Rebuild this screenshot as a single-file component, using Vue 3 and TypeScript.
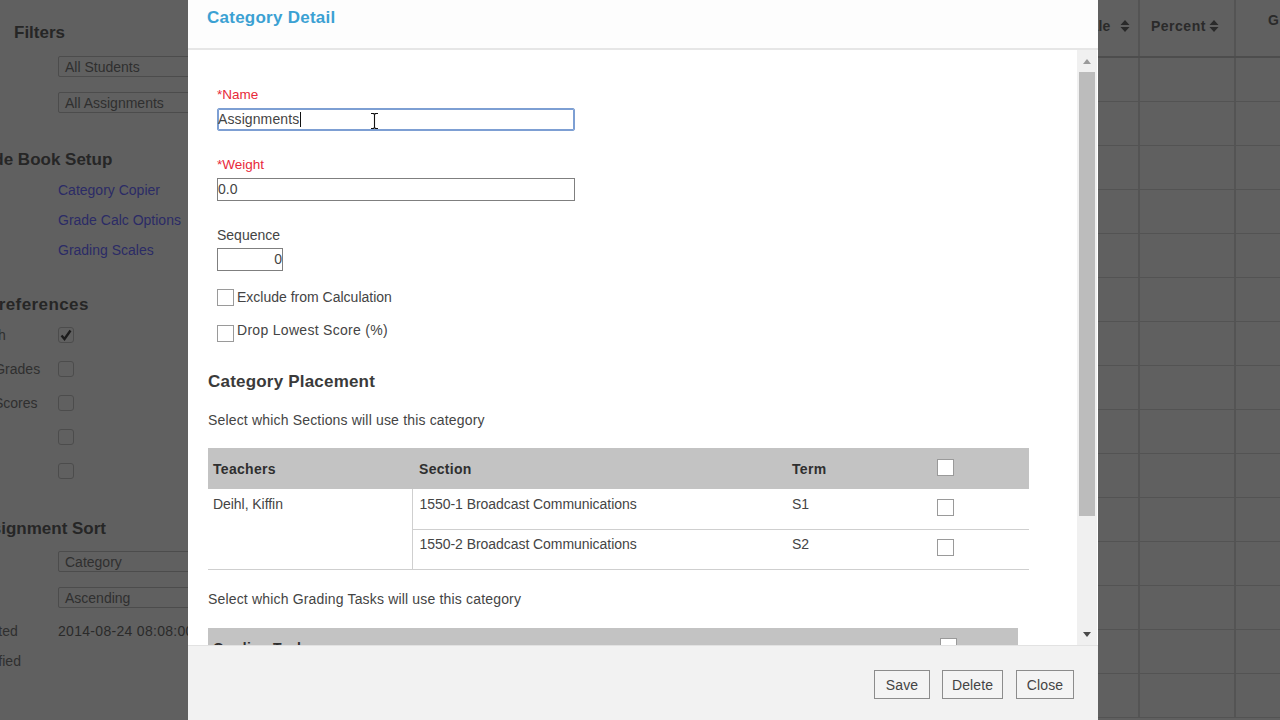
<template>
  <div class="page">
    <!-- dimmed gradebook behind the dialog -->
    <div class="backdrop">
      <aside class="side">
        <h3 class="side-title filters">Filters</h3>
        <div class="side-select first">All Students</div>
        <div class="side-select">All Assignments</div>

        <h3 class="side-title setup">Grade Book Setup</h3>
        <a v-for="link in setupLinks" :key="link" class="side-link">{{ link }}</a>

        <h3 class="side-title prefs">Preferences</h3>
        <div v-for="pref in prefs" :key="pref.label" class="pref-row">
          <span class="pref-label" :style="{ paddingLeft: pref.shift + 'px' }">{{ pref.label }}</span>
          <span class="side-check" :class="{ on: pref.on }">
            <svg v-if="pref.on" viewBox="0 0 12 12" width="12" height="12">
              <path d="M1.5 6.5 L4.5 10 L10.5 1.5" fill="none" stroke="#1c1c1c" stroke-width="2.4" />
            </svg>
          </span>
        </div>

        <h3 class="side-title sort">Assignment Sort</h3>
        <div class="side-select first-sort">Category</div>
        <div class="side-select">Ascending</div>
        <div class="meta-row first-meta">
          <span class="meta-label">Created</span>
          <span class="meta-value">2014-08-24 08:08:00</span>
        </div>
        <div class="meta-row">
          <span class="meta-label">Modified</span>
        </div>
      </aside>

      <section class="book">
        <div class="book-head">
          <div class="book-col c1">
            <span class="head-text clip">Scale</span>
            <svg class="sort-icon" viewBox="0 0 10 14" width="10" height="14">
              <path d="M5 1 L9.5 6 H0.5 Z M5 13 L0.5 8 H9.5 Z" fill="#2a2a2a" />
            </svg>
          </div>
          <div class="book-col c2">
            <span class="head-text">Percent</span>
            <svg class="sort-icon" viewBox="0 0 10 14" width="10" height="14">
              <path d="M5 1 L9.5 6 H0.5 Z M5 13 L0.5 8 H9.5 Z" fill="#2a2a2a" />
            </svg>
          </div>
          <div class="book-col c3"><span class="head-text">G</span></div>
        </div>
        <div v-for="n in 15" :key="n" class="book-row">
          <div class="book-col c1"></div>
          <div class="book-col c2"></div>
          <div class="book-col c3"></div>
        </div>
      </section>
    </div>

    <!-- dialog -->
    <div class="modal">
      <header class="modal-head">
        <h2 class="modal-title">Category Detail</h2>
      </header>

      <div class="modal-body">
        <div class="scroll-content">
          <div class="field-block name-block">
            <label class="req">*Name</label>
            <div class="text-input focused">Assignments<span class="caret"></span></div>
          </div>
          <div class="field-block weight-block">
            <label class="req">*Weight</label>
            <div class="text-input">0.0</div>
          </div>
          <div class="field-block seq-block">
            <label>Sequence</label>
            <div class="text-input seq">0</div>
          </div>

          <div class="check-row exclude">
            <span class="check"></span>
            <span>Exclude from Calculation</span>
          </div>
          <div class="check-row drop">
            <span class="check"></span>
            <span class="drop-text">Drop Lowest Score (%)</span>
          </div>

          <h3 class="placement">Category Placement</h3>
          <p class="hint sections-hint">Select which Sections will use this category</p>

          <table class="place-table">
            <colgroup>
              <col class="w-teacher" />
              <col class="w-section" />
              <col class="w-term" />
              <col />
            </colgroup>
            <thead>
              <tr>
                <th>Teachers</th>
                <th>Section</th>
                <th>Term</th>
                <th><span class="check white"></span></th>
              </tr>
            </thead>
            <tbody>
              <tr v-for="(row, i) in sections" :key="row.section">
                <td v-if="i === 0" rowspan="2" class="teacher">Deihl, Kiffin</td>
                <td>{{ row.section }}</td>
                <td>{{ row.term }}</td>
                <td><span class="check low"></span></td>
              </tr>
            </tbody>
          </table>

          <p class="hint tasks-hint">Select which Grading Tasks will use this category</p>

          <div class="tasks-head">
            <span>Grading Tasks</span>
            <span class="check white"></span>
          </div>
        </div>

        <div class="scrollbar">
          <span class="arrow up"></span>
          <span class="thumb"></span>
          <span class="arrow down"></span>
        </div>

        <!-- mouse pointer over the name field -->
        <svg class="ibeam" viewBox="0 0 9 16" width="9" height="16">
          <path d="M1 0.5 H3.5 L4.5 1.5 L5.5 0.5 H8 M4.5 1.5 V14.5 M1 15.5 H3.5 L4.5 14.5 L5.5 15.5 H8" fill="none" stroke="#111" stroke-width="1.1" />
        </svg>
      </div>

      <footer class="modal-foot">
        <button class="btn save">Save</button>
        <button class="btn delete">Delete</button>
        <button class="btn close">Close</button>
      </footer>
    </div>
  </div>
</template>

<script setup lang="ts">
interface Pref {
  label: string
  on: boolean
  shift: number // labels run off the left edge, this nudges where they end
}

const setupLinks: string[] = ['Category Copier', 'Grade Calc Options', 'Grading Scales']

const prefs: Pref[] = [
  { label: 'Graph', on: true, shift: 7 },
  { label: 'Final Grades', on: false, shift: 0 },
  { label: 'Raw Scores', on: false, shift: 2 },
  { label: 'Notes', on: false, shift: 0 },
  { label: 'Totals', on: false, shift: 1 },
]

const sections = [
  { section: '1550-1 Broadcast Communications', term: 'S1' },
  { section: '1550-2 Broadcast Communications', term: 'S2' },
]
</script>

<style>
html, body {
  margin: 0;
  background: #606060;
}
</style>

<style scoped>
.page {
  position: relative;
  width: 1280px;
  height: 720px;
  overflow: hidden;
  font-family: "Liberation Sans", Arial, sans-serif;
  background: #606060;
}

.backdrop {
  display: flex;
  height: 720px;
}

/* left sidebar */
.side {
  width: 188px;
  flex-shrink: 0;
  overflow: hidden;
  color: #333;
  font-size: 14px;
}
.side-title {
  margin: 0;
  font-size: 17px;
  line-height: 24px;
  font-weight: bold;
  color: #262626;
  white-space: nowrap;
}
.filters { margin: 21px 0 0 14px; }
.setup { margin: 35px 0 3px -36px; }
.prefs { margin: 28px 0 1px -13px; letter-spacing: 0.4px; }
.sort { margin: 29px 0 0 -30px; }

.side-select {
  margin: 15px 0 0 58px;
  width: 150px;
  height: 21px;
  line-height: 20px;
  box-sizing: border-box;
  padding-left: 6px;
  border: 1px solid #4c4c4c;
  border-radius: 2px;
  color: #2f2f2f;
  white-space: nowrap;
}
.side-select.first { margin-top: 11px; }
.side-select.first-sort { margin-top: 10px; }

.side-link {
  display: block;
  margin-left: 58px;
  height: 30px;
  line-height: 30px;
  color: #2b2b66;
  white-space: nowrap;
}

.pref-row {
  display: flex;
  align-items: center;
  height: 34px;
  margin-left: -40px;
}
.pref-label {
  box-sizing: border-box;
  width: 98px;
  flex-shrink: 0;
  color: #2f2f2f;
  white-space: nowrap;
}
.side-check {
  display: flex;
  align-items: center;
  justify-content: center;
  width: 16px;
  height: 16px;
  box-sizing: border-box;
  border: 1px solid #4c4c4c;
  border-radius: 3px;
}

.meta-row {
  display: flex;
  align-items: center;
  height: 30px;
  margin-left: -32px;
  white-space: nowrap;
}
.first-meta { margin-top: 8px; }
.meta-label {
  width: 90px;
  flex-shrink: 0;
  color: #2f2f2f;
}
.meta-value {
  color: #2a2a2a;
  letter-spacing: 0.3px;
}

/* grade table on the right */
.book {
  margin-left: 910px;
  flex: 1;
  min-width: 0;
  overflow: hidden;
}
.book-head,
.book-row {
  display: flex;
  box-sizing: border-box;
  border-bottom: 1px solid #4d4d4d;
}
.book-head { height: 58px; border-bottom-width: 2px; }
.book-row { height: 44px; border-bottom-color: #535353; }
.book-col {
  flex-shrink: 0;
  box-sizing: border-box;
  border-right: 2px solid #545454;
}
.c1 { width: 42px; }
.c2 { width: 96px; }
.c3 { width: 60px; border-right: 0; }
.book-head .book-col {
  display: flex;
  align-items: flex-start;
  padding-top: 18px;
  overflow: hidden;
  white-space: nowrap;
}
.head-text {
  font-size: 14px;
  line-height: 16px;
  font-weight: bold;
  color: #2a2a2a;
  letter-spacing: 0.2px;
}
.clip { margin-left: -25px; }
.sort-icon { margin: 1px 0 0 9px; flex-shrink: 0; }
.book-head .c2 { padding-left: 11px; }
.book-head .c2 .head-text { letter-spacing: 0.5px; }
.book-head .c2 .sort-icon { margin-left: 3px; }
.book-head .c3 { padding: 12px 0 0 32px; }

/* dialog */
.modal {
  position: absolute;
  left: 188px;
  top: 0;
  width: 910px;
  height: 720px;
  display: flex;
  flex-direction: column;
  background: #fff;
  color: #444;
  font-size: 14px;
}
.modal-head {
  height: 50px;
  flex-shrink: 0;
  box-sizing: border-box;
  border-bottom: 2px solid #e6e6e6;
  background: #fdfdfd;
}
.modal-title {
  margin: 0;
  padding: 7px 0 0 19px;
  font-size: 17px;
  line-height: 22px;
  font-weight: bold;
  color: #3ba1d3;
  letter-spacing: 0.25px;
}

.modal-body {
  position: relative;
  flex: 1;
  min-height: 0;
  overflow: hidden;
  background: #fff;
}
.scroll-content {
  padding-left: 20px;
  width: 821px;
}

.field-block label {
  display: block;
  height: 18px;
  line-height: 18px;
}
.req { color: #e8293a; font-size: 13.5px; }
.name-block { padding: 36px 0 0 9px; }
.weight-block { padding: 25px 0 0 9px; }
.seq-block { padding: 25px 0 0 9px; }
.name-block label,
.weight-block label { margin-bottom: 4px; }
.seq-block label { margin-bottom: 4px; }

.text-input {
  box-sizing: border-box;
  width: 358px;
  height: 23px;
  line-height: 21px;
  border: 1px solid #7f7f7f;
  background: #fff;
  color: #444;
  white-space: nowrap;
}
.text-input.focused {
  border-color: #7d9fd3;
  border-radius: 2px;
  box-shadow: inset 0 0 0 1px #7d9fd3;
  letter-spacing: 0.1px;
}
.caret {
  display: inline-block;
  width: 1px;
  height: 15px;
  margin-left: 1px;
  background: #111;
  vertical-align: -3px;
}
.text-input.seq {
  width: 66px;
  text-align: right;
}

.check {
  display: inline-block;
  box-sizing: border-box;
  width: 17px;
  height: 17px;
  border: 1px solid #9a9a9a;
  background: #fff;
  flex-shrink: 0;
}
.check-row {
  display: flex;
  align-items: flex-start;
  gap: 3px;
  margin-left: 9px;
  line-height: 17px;
}
.exclude { margin-top: 18px; }
.drop { margin-top: 19px; }
.drop-text { margin-top: -3px; letter-spacing: 0.3px; }

.placement {
  margin: 29px 0 0;
  font-size: 17px;
  line-height: 22px;
  font-weight: bold;
  color: #3a3a3a;
  letter-spacing: 0.2px;
}
.hint {
  margin: 0;
  line-height: 18px;
  letter-spacing: 0.17px;
}
.sections-hint { margin-top: 18px; }
.tasks-hint { margin-top: 20px; }

.place-table {
  width: 821px;
  margin-top: 19px;
  border-collapse: collapse;
  table-layout: fixed;
}
.w-teacher { width: 204px; }
.w-section { width: 375px; }
.w-term { width: 145px; }
.place-table th {
  height: 41px;
  padding: 0 0 0 5px;
  background: #c3c3c3;
  color: #2f2f2f;
  font-size: 14px;
  font-weight: bold;
  text-align: left;
  letter-spacing: 0.3px;
}
.place-table th:nth-child(2) { padding-left: 7px; }
.place-table th:last-child .check { display: block; margin-bottom: 3px; }
.place-table td {
  height: 40px;
  box-sizing: border-box;
  padding: 7px 0 0 7px;
  vertical-align: top;
  line-height: 17px;
  border-bottom: 1px solid #cfcfcf;
  letter-spacing: -0.05px;
}
.place-table td.teacher {
  padding-left: 5px;
  border-right: 1px solid #cfcfcf;
}
.place-table td:nth-last-child(2) { padding-left: 5px; }
.place-table td:last-child { padding: 10px 0 0 5px; }
.place-table tr:nth-child(2) td { padding-top: 6px; }
.place-table tr:nth-child(2) td:last-child { padding-top: 9px; }
.low { display: block; }

.tasks-head {
  display: flex;
  justify-content: space-between;
  width: 810px;
  height: 60px;
  margin-top: 20px;
  box-sizing: border-box;
  padding: 12px 61px 0 5px;
  background: #c3c3c3;
  font-weight: bold;
  color: #2f2f2f;
  letter-spacing: 0.3px;
}
.tasks-head .check { margin-top: -2px; }

.scrollbar {
  position: absolute;
  top: 0;
  right: 1px;
  bottom: 0;
  width: 20px;
  display: flex;
  flex-direction: column;
  align-items: center;
  background: #f0f0f0;
}
.thumb {
  width: 16px;
  height: 444px;
  background: #bcbcbc;
}
.arrow {
  width: 0;
  height: 0;
  border-left: 4px solid transparent;
  border-right: 4px solid transparent;
}
.arrow.up {
  margin: 9px 0 8px;
  border-bottom: 5px solid #9a9a9a;
}
.arrow.down {
  margin-top: auto;
  margin-bottom: 8px;
  border-top: 5px solid #4a4a4a;
}

.ibeam {
  position: absolute;
  left: 182px;
  top: 63px;
}

.modal-foot {
  display: flex;
  justify-content: flex-end;
  height: 75px;
  flex-shrink: 0;
  box-sizing: border-box;
  padding: 24px 24px 0 0;
  border-top: 1px solid #e2e2e2;
  background: #f2f2f2;
}
.btn {
  height: 29px;
  box-sizing: border-box;
  padding: 0;
  border: 1px solid #8c8c8c;
  background: #f4f4f4;
  color: #444;
  font-family: inherit;
  font-size: 14px;
  letter-spacing: 0.1px;
}
.save { width: 56px; }
.delete { width: 61px; margin-left: 12px; }
.close { width: 58px; margin-left: 13px; }
</style>
